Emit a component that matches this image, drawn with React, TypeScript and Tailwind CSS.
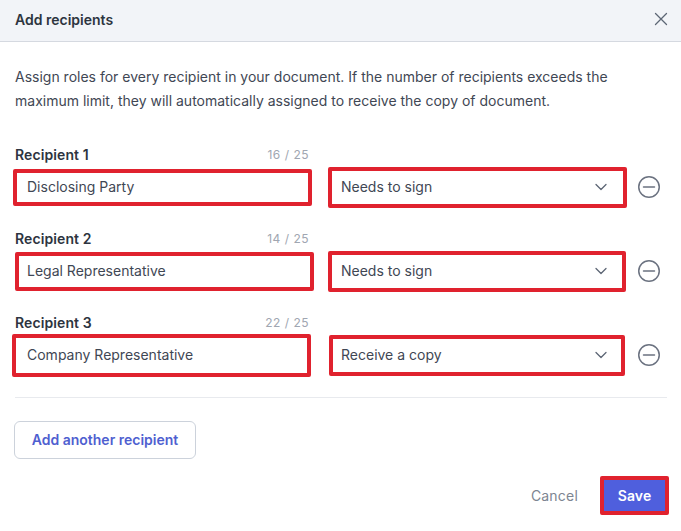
const rows = [
  { label: "Recipient 1", count: "16 / 25", value: "Disclosing Party", role: "Needs to sign", input: "ml-[-2px] w-[299px] h-[37px] pl-[10px]", select: "ml-[16px] w-[299px] h-[41px] pl-[9px] pr-[15px]" },
  { label: "Recipient 2", count: "14 / 25", value: "Legal Representative", role: "Needs to sign", input: "w-[299px] h-[39px] pl-[8px]", select: "ml-[14px] w-[298px] h-[41px] pl-[9px] pr-[14px]" },
  { label: "Recipient 3", count: "22 / 25", value: "Company Representative", role: "Receive a copy", input: "ml-[-3px] w-[299px] h-[43px] pl-[11px]", select: "ml-[18px] w-[296px] h-[41px] pl-[8px] pr-[13px]" },
];

function Minus() {
  return (
    <svg width="24" height="24" viewBox="0 0 24 24" fill="none" stroke="#6b7280" strokeWidth="1.5" strokeLinecap="round">
      <circle cx="12" cy="12" r="10.25" />
      <path d="M6.5 12h11" />
    </svg>
  );
}

export default function App() {
  return (
    <div className="w-[681px] h-[531px] bg-white font-['Inter',sans-serif] text-[14px] overflow-hidden">
      <header className="h-[42px] bg-[#f2f4f8] border-b border-[#d5d9e0] flex items-center justify-between pl-[15px] pr-[13px] pb-[3px]">
        <h1 className="font-semibold text-[#2d3440]">Add recipients</h1>
        <svg width="14" height="14" viewBox="0 0 14 14" fill="none" stroke="#5d6675" strokeWidth="1.3" strokeLinecap="round">
          <path d="M1.5 1.5l11 11M12.5 1.5l-11 11" />
        </svg>
      </header>
      <main className="px-[15px]">
        <p className="pt-[23px] leading-[24px] text-[#3f4754]">
          Assign roles for every recipient in your document. If the number of recipients exceeds the
          <br />
          maximum limit, they will automatically assigned to receive the copy of document.
        </p>
        <div className="mt-[32px] flex flex-col gap-[21px]">
          {rows.map((r) => (
            <div key={r.label}>
              <div className="w-[294px] h-[21px] pb-[2px] flex items-center justify-between">
                <span className="font-semibold text-[#2d3440] tracking-[0.1px]">{r.label}</span>
                <span className="text-[12px] text-[#a0a6b1] tracking-[0.5px]">{r.count}</span>
              </div>
              <div className="h-[42px] flex items-center">
                <div className={`${r.input} shrink-0 flex items-center pb-[1px] border-[4px] border-[#e0222e] rounded-[2px] text-[#3f4754]`}>
                  {r.value}
                </div>
                <div className={`${r.select} shrink-0 flex items-center justify-between border-[4px] border-[#e0222e] rounded-[2px] text-[#3f4754]`}>
                  <span className="pb-[1px]">{r.role}</span>
                  <svg width="14" height="8" viewBox="0 0 14 8" fill="none" stroke="#5d6675" strokeWidth="1.3" strokeLinecap="round" strokeLinejoin="round">
                    <path d="M2 1.5l5 5 5-5" />
                  </svg>
                </div>
                <div className="ml-auto mr-[5px]"><Minus /></div>
              </div>
            </div>
          ))}
        </div>
        <div className="mt-[21px] border-t border-[#e8eaee] w-[652px]" />
        <button className="mt-[23px] ml-[-1px] h-[38px] w-[182px] pb-[1px] rounded-[6px] border border-[#ccd2db] bg-white font-semibold text-[#4f5fd0]">
          Add another recipient
        </button>
        <div className="mt-[17px] flex items-center justify-end gap-[22px]">
          <span className="text-[#7d8591] tracking-[0.2px]">Cancel</span>
          <button className="mr-[-3px] w-[69px] h-[39px] rounded-[2px] border-[4px] border-[#e0222e] bg-[#4f5fdd] text-white font-semibold tracking-[0.1px]">
            Save
          </button>
        </div>
      </main>
    </div>
  );
}
